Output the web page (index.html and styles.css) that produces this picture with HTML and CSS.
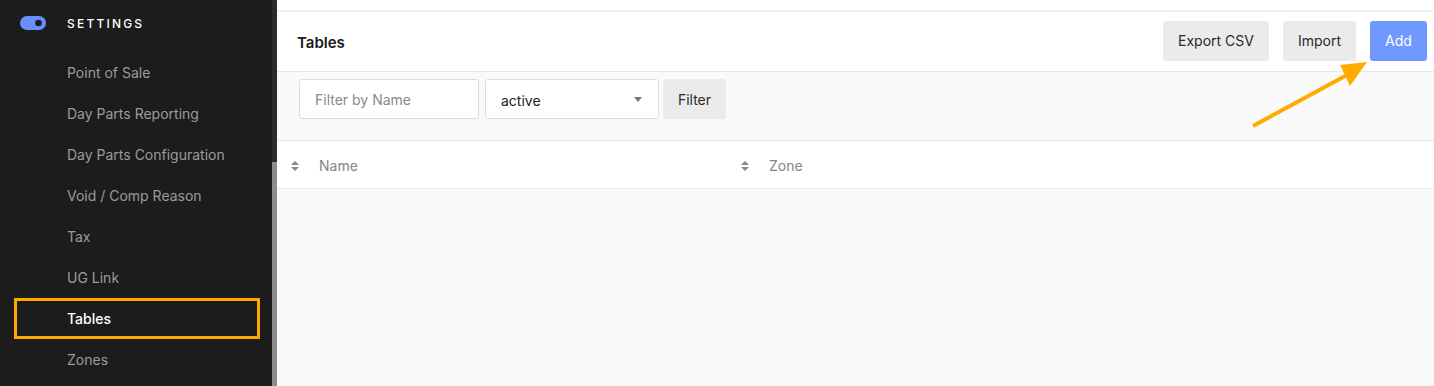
FILE: index.html
```html
<!DOCTYPE html>
<html>
<head>
<meta charset="utf-8">
<link rel="stylesheet" href="styles.css">
</head>
<body>
<div class="app">
  <aside class="sidebar">
    <div class="brand">
      <svg class="toggle" width="26" height="14" viewBox="0 0 26 14"><rect x="0" y="0" width="26" height="14" rx="7" fill="#6b8eff"/><circle cx="18.5" cy="7" r="3.3" fill="#1c1c1c"/></svg>
      <span class="brand-title">SETTINGS</span>
    </div>
    <nav class="nav">
      <div class="nav-item">Point of Sale</div>
      <div class="nav-item">Day Parts Reporting</div>
      <div class="nav-item">Day Parts Configuration</div>
      <div class="nav-item">Void / Comp Reason</div>
      <div class="nav-item">Tax</div>
      <div class="nav-item">UG Link</div>
      <div class="nav-item active">Tables</div>
      <div class="nav-item">Zones</div>
    </nav>
  </aside>
  <div class="scrollbar"><div class="thumb"></div></div>
  <main class="main">
    <div class="topband"></div>
    <header class="header">
      <h1 class="title">Tables</h1>
      <div class="actions">
        <button class="btn">Export CSV</button>
        <button class="btn">Import</button>
        <button class="btn primary">Add</button>
      </div>
    </header>
    <div class="filters">
      <div class="input placeholder">Filter by Name</div>
      <div class="select"><span>active</span><span class="caret"></span></div>
      <button class="btn filter-btn">Filter</button>
    </div>
    <div class="thead">
      <div class="th col-name"><span class="sort"></span>Name</div>
      <div class="th col-zone"><span class="sort"></span>Zone</div>
    </div>
    <div class="tbody"></div>
    <svg class="arrow" width="140" height="80" viewBox="0 0 140 80">
      <line x1="6" y1="72" x2="100" y2="21" stroke="#ffab00" stroke-width="4" stroke-linecap="butt"/>
      <polygon points="120,8 93,11 103,32" fill="#ffab00"/>
    </svg>
  </main>
</div>
</body>
</html>
```
FILE: styles.css
```css
* { box-sizing: border-box; }
html, body { margin: 0; padding: 0; height: 100%; }
body {
  font-family: Inter, "Noto Sans", "Liberation Sans", sans-serif;
  background: #fafafa;
  overflow: hidden;
}
.app { display: flex; height: 386px; }
.sidebar {
  width: 272px;
  background: #1c1c1c;
  flex-shrink: 0;
}
.brand {
  display: flex;
  align-items: center;
  height: 46px;
  padding-left: 20px;
}
.toggle { display: block; }
.brand-title {
  margin-left: 21px;
  color: #fff;
  font-size: 12px;
  font-weight: 500;
  letter-spacing: 2.2px;
}
.nav { padding-top: 6px; }
.nav-item {
  height: 41px;
  display: flex;
  align-items: center;
  padding-left: 67px;
  color: #9b9b9b;
  font-size: 14px;
}
.nav-item.active {
  color: #fff;
  font-weight: 500;
  outline: 3px solid #ffa800;
  outline-offset: -3px;
  margin-left: 14px;
  margin-right: 12px;
  padding-left: 53px;
}
.scrollbar {
  width: 5px;
  background: #2b2b2b;
  flex-shrink: 0;
  display: flex;
  flex-direction: column;
  justify-content: flex-end;
}
.thumb { height: 224px; background: #8c8c8c; }
.main {
  flex: 1;
  position: relative;
  display: flex;
  flex-direction: column;
  background: #fafafa;
}
.topband {
  height: 10px;
  background: #fff;
  box-shadow: 0 1px 2px rgba(0,0,0,0.12);
  position: relative;
  z-index: 1;
}
.header {
  height: 62px;
  background: #fff;
  display: flex;
  align-items: center;
  justify-content: space-between;
  padding: 0 7px 0 20px;
  border-bottom: 1px solid #e8e8e8;
}
.title {
  margin: 3px 0 0 0;
  font-size: 15px;
  font-weight: 600;
  color: #1a1a1a;
}
.actions { display: flex; gap: 14px; }
.btn {
  font-family: inherit;
  font-size: 14px;
  color: #2a2a2a;
  background: #ebebeb;
  border: none;
  border-radius: 3px;
  height: 40px;
  padding: 0 15px;
}
.btn.primary { background: #7099ff; color: #fff; width: 57px; padding: 0; }
.filters {
  height: 69px;
  display: flex;
  align-items: flex-start;
  padding: 7px 0 0 22px;
  border-bottom: 1px solid #e8e8e8;
}
.input, .select {
  height: 40px;
  background: #fff;
  border: 1px solid #dcdcdc;
  border-radius: 3px;
  font-size: 14px;
  display: flex;
  align-items: center;
}
.input { width: 180px; padding-left: 15px; color: #8a8a8a; }
.select {
  width: 174px;
  margin-left: 6px;
  padding: 0 16px 0 15px;
  color: #222;
  justify-content: space-between;
}
.select span:first-child { margin-top: 2px; }
.caret {
  width: 0; height: 0;
  border-left: 4px solid transparent;
  border-right: 4px solid transparent;
  border-top: 5px solid #777;
}
.filter-btn { margin-left: 4px; width: 63px; padding: 0; }
.thead {
  height: 48px;
  background: #fff;
  display: flex;
  align-items: center;
  border-bottom: 1px solid #e8e8e8;
}
.th {
  display: flex;
  align-items: center;
  color: #858585;
  font-size: 14px;
  padding-top: 2px;
}
.col-name { width: 450px; padding-left: 14px; }
.sort {
  display: inline-block;
  width: 8px;
  height: 10px;
  margin-right: 20px;
  position: relative;
}
.sort::before, .sort::after {
  content: "";
  position: absolute;
  left: 0;
  border-left: 4px solid transparent;
  border-right: 4px solid transparent;
}
.sort::before { top: 0; border-bottom: 4px solid #8a8a8a; }
.sort::after { bottom: 0; border-top: 4px solid #8a8a8a; }
.col-zone { padding-left: 14px; }
.tbody { flex: 1; background: #fafafa; }
.arrow {
  position: absolute;
  left: 970px;
  top: 54px;
}
```
